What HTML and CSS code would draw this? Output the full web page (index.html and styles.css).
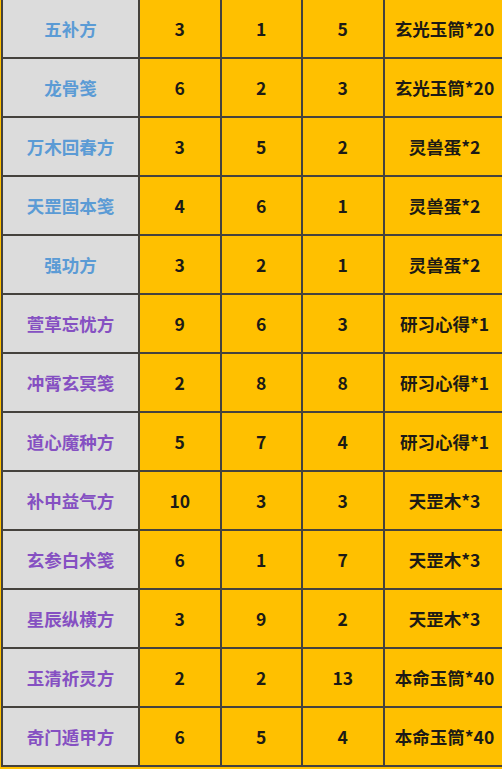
FILE: index.html
```html
<!DOCTYPE html>
<html lang="zh-CN">
<head>
<meta charset="utf-8">
<link rel="stylesheet" href="styles.css">
</head>
<body>
<table class="recipes">
<colgroup>
<col class="c-name"><col class="c-num"><col class="c-num"><col class="c-num"><col class="c-cost">
</colgroup>
<tbody>
<tr><th class="blue">五补方</th><td>3</td><td>1</td><td>5</td><td>玄光玉筒*20</td></tr>
<tr><th class="blue">龙骨笺</th><td>6</td><td>2</td><td>3</td><td>玄光玉筒*20</td></tr>
<tr><th class="blue">万木回春方</th><td>3</td><td>5</td><td>2</td><td>灵兽蛋*2</td></tr>
<tr><th class="blue">天罡固本笺</th><td>4</td><td>6</td><td>1</td><td>灵兽蛋*2</td></tr>
<tr><th class="blue">强功方</th><td>3</td><td>2</td><td>1</td><td>灵兽蛋*2</td></tr>
<tr><th class="purple">萱草忘忧方</th><td>9</td><td>6</td><td>3</td><td>研习心得*1</td></tr>
<tr><th class="purple">冲霄玄冥笺</th><td>2</td><td>8</td><td>8</td><td>研习心得*1</td></tr>
<tr><th class="purple">道心魔种方</th><td>5</td><td>7</td><td>4</td><td>研习心得*1</td></tr>
<tr><th class="purple">补中益气方</th><td>10</td><td>3</td><td>3</td><td>天罡木*3</td></tr>
<tr><th class="purple">玄参白术笺</th><td>6</td><td>1</td><td>7</td><td>天罡木*3</td></tr>
<tr><th class="purple">星辰纵横方</th><td>3</td><td>9</td><td>2</td><td>天罡木*3</td></tr>
<tr><th class="purple">玉清祈灵方</th><td>2</td><td>2</td><td>13</td><td>本命玉筒*40</td></tr>
<tr><th class="purple">奇门遁甲方</th><td>6</td><td>5</td><td>4</td><td>本命玉筒*40</td></tr>
</tbody>
</table>
</body>
</html>
```
FILE: styles.css
```css
html, body {
  margin: 0;
  padding: 0;
  background: #ffc000;
  overflow: hidden;
}
.recipes {
  border-collapse: collapse;
  table-layout: fixed;
  width: 504px;
  margin: -2px 0 0 1px;
  font-family: "Noto Sans CJK SC", "Noto Sans", sans-serif;
  font-size: 17.5px;
  font-weight: 700;
}
.c-name { width: 137px; }
.c-num { width: 81.5px; }
.c-cost { width: 122px; }
.recipes th,
.recipes td {
  height: 59px;
  padding: 0;
  border: 2px solid #45423d;
  text-align: center;
  vertical-align: middle;
  box-sizing: border-box;
  line-height: 1;
}
.recipes td {
  background: #ffc000;
  color: #1c1a16;
}
.recipes th {
  background: #dcdcdc;
  font-weight: 700;
}
.blue { color: #5b9bd5; }
.purple { color: #8550c2; }
```
